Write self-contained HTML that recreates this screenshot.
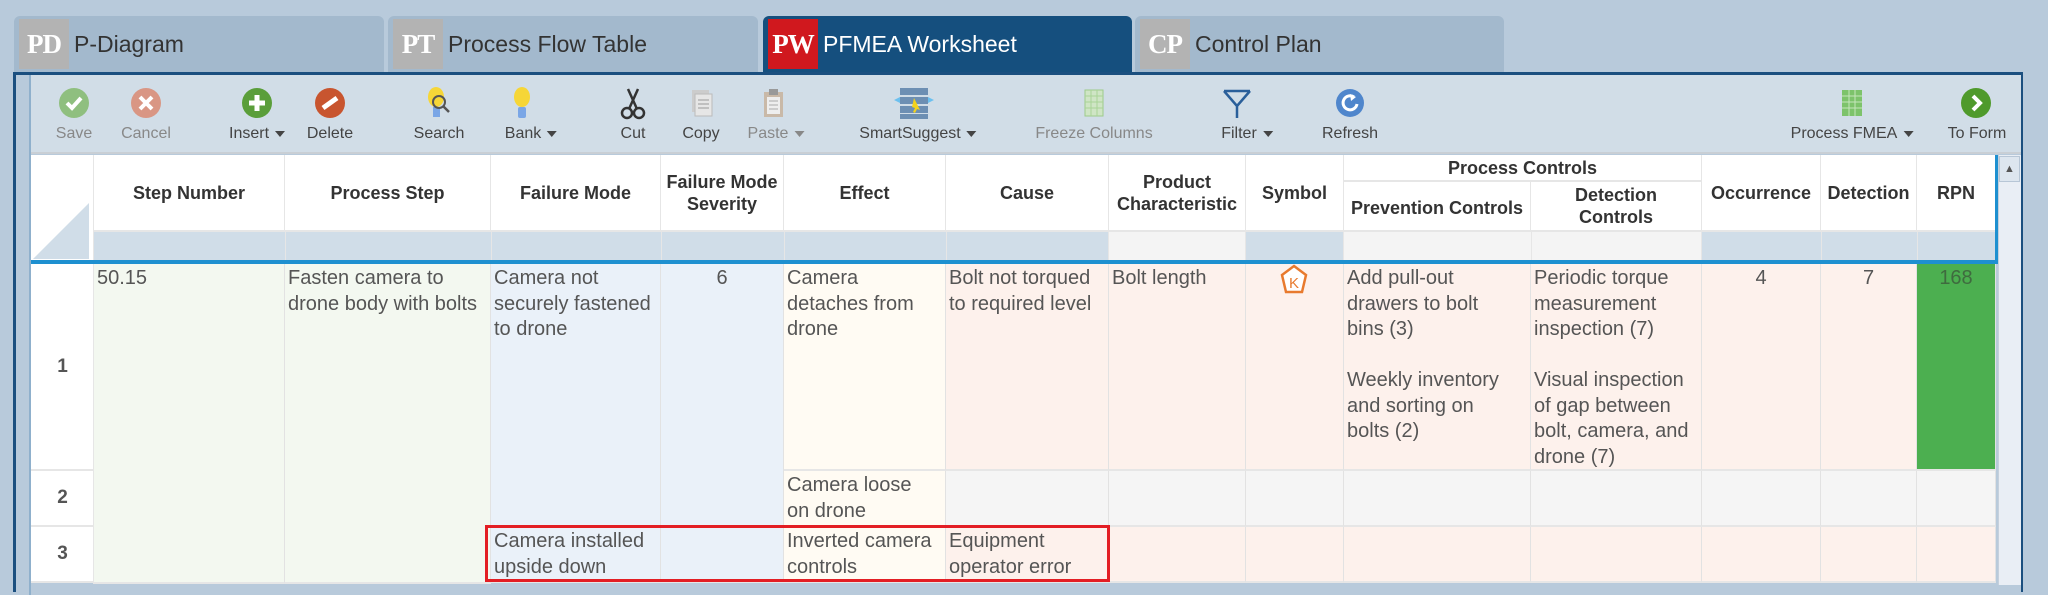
<!DOCTYPE html>
<html><head><meta charset="utf-8"><style>
*{box-sizing:border-box;margin:0;padding:0}
body{width:2048px;height:584px;overflow:hidden;background:#b8cadb;font-family:"Liberation Sans",Arial,sans-serif;position:relative}
.a{position:absolute}
.tab{position:absolute;top:16px;height:57px;background:#a3b9cd;border-radius:6px 6px 0 0;color:#333;font-size:23px}
.tab .ic{position:absolute;left:5px;top:3px;width:50px;height:50px;background:#b3b3b3;color:#fff;font-family:"Liberation Serif",serif;font-weight:bold;font-size:27px;line-height:50px;text-align:center;letter-spacing:-1px}
.tab .tx{position:absolute;left:60px;top:0;line-height:57px;white-space:nowrap}
.lbl{position:absolute;top:124px;height:20px;line-height:20px;font-size:16px;color:#444;white-space:nowrap;transform:translateX(-50%)}
.lbl i{display:inline-block;width:0;height:0;border-left:5px solid transparent;border-right:5px solid transparent;border-top:6px solid #444;margin-left:6px;vertical-align:middle}
.dis{color:#888}
.dis i{border-top-color:#888}
.ico{position:absolute;top:86px;width:34px;height:34px;transform:translateX(-50%)}
.c{position:absolute;border-right:1px solid #e2e2e2;border-bottom:2px solid #e6e6e6;font-size:20px;line-height:25.5px;color:#555;padding:2px 3px;white-space:nowrap;overflow:hidden}
.h{position:absolute;border-right:1px solid #e6e6e6;border-bottom:2px solid #e6e6e6;background:#fff;font-weight:bold;font-size:18px;color:#333;display:flex;align-items:center;justify-content:center;text-align:center;line-height:22px}
.f{position:absolute;top:232px;height:28px;background:#d0dde8;border-right:1px solid #e6e6e6}
.rn{position:absolute;left:31px;width:63px;background:#fff;border-bottom:2px solid #e6e6e6;font-weight:bold;font-size:19px;color:#555;display:flex;align-items:center;justify-content:center}
.ctr{text-align:center}
</style></head><body>

<div class="tab" style="left:14px;width:370px"><div class="ic">PD</div><div class="tx">P-Diagram</div></div>
<div class="tab" style="left:388px;width:370px"><div class="ic">PT</div><div class="tx">Process Flow Table</div></div>
<div class="tab" style="left:763px;width:369px;background:#154f7e;color:#fff"><div class="ic" style="background:#d0181e">PW</div><div class="tx">PFMEA Worksheet</div></div>
<div class="tab" style="left:1135px;width:369px"><div class="ic">CP</div><div class="tx">Control Plan</div></div>

<div class="a" style="left:13px;top:72px;width:2010px;height:3px;background:#1b4f7f"></div>
<div class="a" style="left:13px;top:72px;width:3px;height:520px;background:#1b4f7f"></div>
<div class="a" style="left:29px;top:75px;width:2px;height:520px;background:#8fb0cc"></div>
<div class="a" style="left:2021px;top:72px;width:2px;height:520px;background:#1b4f7f"></div>

<div class="a" style="left:31px;top:75px;width:1990px;height:79px;background:#d1dde7;border-bottom:2px solid #c9cfd5"></div>

<svg class="ico" style="left:74px" viewBox="0 0 34 34"><circle cx="17" cy="17" r="15" fill="#8fbf7f"/><path d="M10 17l5 5 9-10" stroke="#fff" stroke-width="4" fill="none"/></svg>
<svg class="ico" style="left:146px" viewBox="0 0 34 34"><circle cx="17" cy="17" r="15" fill="#d99684"/><path d="M11 11l12 12M23 11l-12 12" stroke="#fff" stroke-width="4"/></svg>
<svg class="ico" style="left:257px" viewBox="0 0 34 34"><circle cx="17" cy="17" r="15" fill="#5a9e3a"/><path d="M17 9v16M9 17h16" stroke="#fff" stroke-width="5"/></svg>
<svg class="ico" style="left:330px" viewBox="0 0 34 34"><circle cx="17" cy="17" r="15" fill="#c8552f"/><path d="M10 22l14-10" stroke="#fff" stroke-width="5"/></svg>
<svg class="ico" style="left:439px" viewBox="0 0 34 34"><ellipse cx="14" cy="11" rx="8" ry="10" fill="#f6d637"/><rect x="11" y="21" width="7" height="10" fill="#7aa6e6"/><circle cx="17" cy="16" r="6" fill="none" stroke="#555" stroke-width="2"/><path d="M21 20l6 6" stroke="#555" stroke-width="2.5"/></svg>
<svg class="ico" style="left:522px" viewBox="0 0 34 34"><ellipse cx="17" cy="11" rx="8" ry="10" fill="#f6d637"/><rect x="13" y="21" width="8" height="11" rx="2" fill="#7aa6e6"/></svg>
<svg class="ico" style="left:633px" viewBox="0 0 34 34"><path d="M12 3l9 20M22 3l-9 20" stroke="#333" stroke-width="2.5"/><circle cx="11" cy="27" r="5" fill="none" stroke="#333" stroke-width="2.5"/><circle cx="23" cy="27" r="5" fill="none" stroke="#333" stroke-width="2.5"/></svg>
<svg class="ico" style="left:701px" viewBox="0 0 34 34"><rect x="8" y="4" width="17" height="22" fill="#ccc"/><rect x="11" y="8" width="17" height="22" fill="#e6e6e6" stroke="#bbb"/><path d="M14 14h11M14 18h11M14 22h11" stroke="#999"/></svg>
<svg class="ico" style="left:773px" viewBox="0 0 34 34"><rect x="8" y="6" width="19" height="25" fill="#c9b9a8"/><rect x="13" y="3" width="9" height="6" fill="#999"/><rect x="11" y="11" width="13" height="17" fill="#eee"/><path d="M13 15h9M13 19h9M13 23h9" stroke="#aaa"/></svg>
<svg class="ico" style="left:914px;width:44px" viewBox="0 0 44 34"><rect x="8" y="2" width="28" height="7" fill="#6d8fb3"/><rect x="8" y="11" width="28" height="7" fill="#6d8fb3"/><rect x="8" y="20" width="28" height="7" fill="#6d8fb3"/><rect x="8" y="28" width="28" height="5" fill="#6d8fb3"/><path d="M2 14l6-3v6zM42 14l-6-3v6z" fill="#6cc0ef"/><path d="M22 12l6 12-3-1-2 4-2-1 2-4-3-1z" fill="#f3d21c"/></svg>
<svg class="ico" style="left:1094px" viewBox="0 0 34 34"><rect x="8" y="4" width="18" height="26" fill="#cfe5c5" stroke="#9dcb8a"/><path d="M8 10h18M8 16h18M8 22h18M14 4v26M20 4v26" stroke="#a9d496"/></svg>
<svg class="ico" style="left:1237px" viewBox="0 0 34 34"><path d="M4 5h26M4 5l13 15v12M30 5l-13 15" stroke="#2a5f9a" stroke-width="2.5" fill="none"/></svg>
<svg class="ico" style="left:1350px" viewBox="0 0 34 34"><circle cx="17" cy="17" r="14" fill="#4f86cc"/><path d="M21 11a7 7 0 1 0 3 7" stroke="#fff" stroke-width="3" fill="none"/><path d="M17 8l6 3-5 4z" fill="#fff"/></svg>
<svg class="ico" style="left:1852px" viewBox="0 0 34 34"><rect x="7" y="4" width="20" height="26" fill="#7dc36b"/><path d="M7 10h20M7 16h20M7 22h20M14 4v26M20 4v26" stroke="#c5e6bb"/></svg>
<svg class="ico" style="left:1976px" viewBox="0 0 34 34"><circle cx="17" cy="17" r="15" fill="#4f9a2b"/><path d="M14 10l7 7-7 7" stroke="#fff" stroke-width="4" fill="none"/></svg>

<div class="lbl dis" style="left:74px">Save</div>
<div class="lbl dis" style="left:146px">Cancel</div>
<div class="lbl" style="left:257px">Insert<i></i></div>
<div class="lbl" style="left:330px">Delete</div>
<div class="lbl" style="left:439px">Search</div>
<div class="lbl" style="left:531px">Bank<i></i></div>
<div class="lbl" style="left:633px">Cut</div>
<div class="lbl" style="left:701px">Copy</div>
<div class="lbl dis" style="left:776px">Paste<i></i></div>
<div class="lbl" style="left:918px">SmartSuggest<i></i></div>
<div class="lbl dis" style="left:1094px">Freeze Columns</div>
<div class="lbl" style="left:1247px">Filter<i></i></div>
<div class="lbl" style="left:1350px">Refresh</div>
<div class="lbl" style="left:1852px">Process FMEA<i></i></div>
<div class="lbl" style="left:1977px">To Form</div>

<div class="a" style="left:31px;top:155px;width:1967px;height:107px;background:#fff"></div>
<div class="a" style="left:31px;top:155px;width:63px;height:105px;background:#fff;border-right:1px solid #e6e6e6"></div>
<svg class="a" style="left:33px;top:203px" width="58" height="56"><path d="M0 56L56 0V56z" fill="#d0dde8"/></svg>
<div class="h" style="left:94px;top:155px;width:191px;height:77px">Step Number</div>
<div class="h" style="left:285px;top:155px;width:206px;height:77px">Process Step</div>
<div class="h" style="left:491px;top:155px;width:170px;height:77px">Failure Mode</div>
<div class="h" style="left:661px;top:155px;width:123px;height:77px">Failure Mode<br>Severity</div>
<div class="h" style="left:784px;top:155px;width:162px;height:77px">Effect</div>
<div class="h" style="left:946px;top:155px;width:163px;height:77px">Cause</div>
<div class="h" style="left:1109px;top:155px;width:137px;height:77px">Product<br>Characteristic</div>
<div class="h" style="left:1246px;top:155px;width:98px;height:77px">Symbol</div>
<div class="h" style="left:1344px;top:155px;width:358px;height:27px">Process Controls</div>
<div class="h" style="left:1344px;top:182px;width:187px;height:50px;padding-top:4px">Prevention Controls</div>
<div class="h" style="left:1531px;top:182px;width:171px;height:50px">Detection<br>Controls</div>
<div class="h" style="left:1702px;top:155px;width:119px;height:77px">Occurrence</div>
<div class="h" style="left:1821px;top:155px;width:96px;height:77px">Detection</div>
<div class="h" style="left:1917px;top:155px;width:79px;height:77px">RPN</div>

<div class="f" style="left:94px;width:1015px"></div>
<div class="f" style="left:1109px;width:137px;background:#f4f4f4"></div>
<div class="f" style="left:1246px;width:98px"></div>
<div class="f" style="left:1344px;width:358px;background:#f4f4f4"></div>
<div class="f" style="left:1702px;width:294px"></div>
<div class="a" style="left:285px;top:232px;width:1px;height:28px;background:#e6e6e6"></div>
<div class="a" style="left:491px;top:232px;width:1px;height:28px;background:#e6e6e6"></div>
<div class="a" style="left:661px;top:232px;width:1px;height:28px;background:#e6e6e6"></div>
<div class="a" style="left:784px;top:232px;width:1px;height:28px;background:#e6e6e6"></div>
<div class="a" style="left:946px;top:232px;width:1px;height:28px;background:#e6e6e6"></div>
<div class="a" style="left:1531px;top:232px;width:1px;height:28px;background:#e6e6e6"></div>
<div class="a" style="left:1821px;top:232px;width:1px;height:28px;background:#e6e6e6"></div>
<div class="a" style="left:1917px;top:232px;width:1px;height:28px;background:#e6e6e6"></div>

<div class="a" style="left:31px;top:260px;width:1967px;height:4px;background:#1e90d0"></div>
<div class="a" style="left:1995px;top:155px;width:3px;height:107px;background:#1e90d0"></div>

<div class="a" style="left:1998px;top:155px;width:23px;height:430px;background:#e9eef5;border-left:1px solid #c5d0dc"></div>
<div class="a" style="left:1999px;top:156px;width:21px;height:26px;background:#dde6ef;border:1px solid #b7c6d6;font-size:11px;color:#555;text-align:center;line-height:24px">▲</div>

<div class="rn" style="top:264px;height:207px">1</div>
<div class="rn" style="top:471px;height:56px">2</div>
<div class="rn" style="top:527px;height:56px">3</div>
<div class="a" style="left:93px;top:264px;width:1px;height:320px;background:#e6e6e6"></div>

<div class="c" style="left:94px;top:264px;width:191px;height:320px;background:#f3f8f0">50.15</div>
<div class="c" style="left:285px;top:264px;width:206px;height:320px;background:#f3f8f0">Fasten camera to<br>drone body with bolts</div>
<div class="c" style="left:491px;top:264px;width:170px;height:263px;background:#eaf1f9">Camera not<br>securely fastened<br>to drone</div>
<div class="c ctr" style="left:661px;top:264px;width:123px;height:263px;background:#eaf1f9">6</div>
<div class="c" style="left:784px;top:264px;width:162px;height:207px;background:#fffbf3">Camera<br>detaches from<br>drone</div>
<div class="c" style="left:946px;top:264px;width:163px;height:207px;background:#fdf1ec">Bolt not torqued<br>to required level</div>
<div class="c" style="left:1109px;top:264px;width:137px;height:207px;background:#fdf1ec">Bolt length</div>
<div class="c" style="left:1246px;top:264px;width:98px;height:207px;background:#fdf1ec"></div>
<svg class="a" style="left:1280px;top:264px" width="28" height="32" viewBox="0 0 28 32"><path d="M14 2L26 11L22 28H6L2 11Z" fill="#fff" stroke="#e87a2e" stroke-width="2.5"/><text x="14" y="24" text-anchor="middle" font-family="Liberation Sans" font-size="15" fill="#e87a2e">K</text></svg>
<div class="c" style="left:1344px;top:264px;width:187px;height:207px;background:#fdf1ec">Add pull-out<br>drawers to bolt<br>bins (3)<br><br>Weekly inventory<br>and sorting on<br>bolts (2)</div>
<div class="c" style="left:1531px;top:264px;width:171px;height:207px;background:#fdf1ec">Periodic torque<br>measurement<br>inspection (7)<br><br>Visual inspection<br>of gap between<br>bolt, camera, and<br>drone (7)</div>
<div class="c ctr" style="left:1702px;top:264px;width:119px;height:207px;background:#fdf1ec">4</div>
<div class="c ctr" style="left:1821px;top:264px;width:96px;height:207px;background:#fdf1ec">7</div>
<div class="c ctr" style="left:1917px;top:264px;width:79px;height:207px;background:#4caf50;color:#3f6b3f">168</div>

<div class="c" style="left:784px;top:471px;width:162px;height:56px;background:#fffbf3">Camera loose<br>on drone</div>
<div class="c" style="left:946px;top:471px;width:163px;height:56px;background:#f5f5f5"></div>
<div class="c" style="left:1109px;top:471px;width:137px;height:56px;background:#f5f5f5"></div>
<div class="c" style="left:1246px;top:471px;width:98px;height:56px;background:#f5f5f5"></div>
<div class="c" style="left:1344px;top:471px;width:187px;height:56px;background:#f5f5f5"></div>
<div class="c" style="left:1531px;top:471px;width:171px;height:56px;background:#f5f5f5"></div>
<div class="c" style="left:1702px;top:471px;width:119px;height:56px;background:#f5f5f5"></div>
<div class="c" style="left:1821px;top:471px;width:96px;height:56px;background:#f5f5f5"></div>
<div class="c" style="left:1917px;top:471px;width:79px;height:56px;background:#f5f5f5"></div>

<div class="c" style="left:491px;top:527px;width:170px;height:56px;background:#eaf1f9">Camera installed<br>upside down</div>
<div class="c" style="left:661px;top:527px;width:123px;height:56px;background:#eaf1f9"></div>
<div class="c" style="left:784px;top:527px;width:162px;height:56px;background:#fffbf3">Inverted camera<br>controls</div>
<div class="c" style="left:946px;top:527px;width:163px;height:56px;background:#fdf1ec">Equipment<br>operator error</div>
<div class="c" style="left:1109px;top:527px;width:137px;height:56px;background:#fdf1ec"></div>
<div class="c" style="left:1246px;top:527px;width:98px;height:56px;background:#fdf1ec"></div>
<div class="c" style="left:1344px;top:527px;width:187px;height:56px;background:#fdf1ec"></div>
<div class="c" style="left:1531px;top:527px;width:171px;height:56px;background:#fdf1ec"></div>
<div class="c" style="left:1702px;top:527px;width:119px;height:56px;background:#fdf1ec"></div>
<div class="c" style="left:1821px;top:527px;width:96px;height:56px;background:#fdf1ec"></div>
<div class="c" style="left:1917px;top:527px;width:79px;height:56px;background:#fdf1ec"></div>

<div class="a" style="left:485px;top:525px;width:625px;height:57px;border:3px solid #e31e24"></div>
</body></html>
